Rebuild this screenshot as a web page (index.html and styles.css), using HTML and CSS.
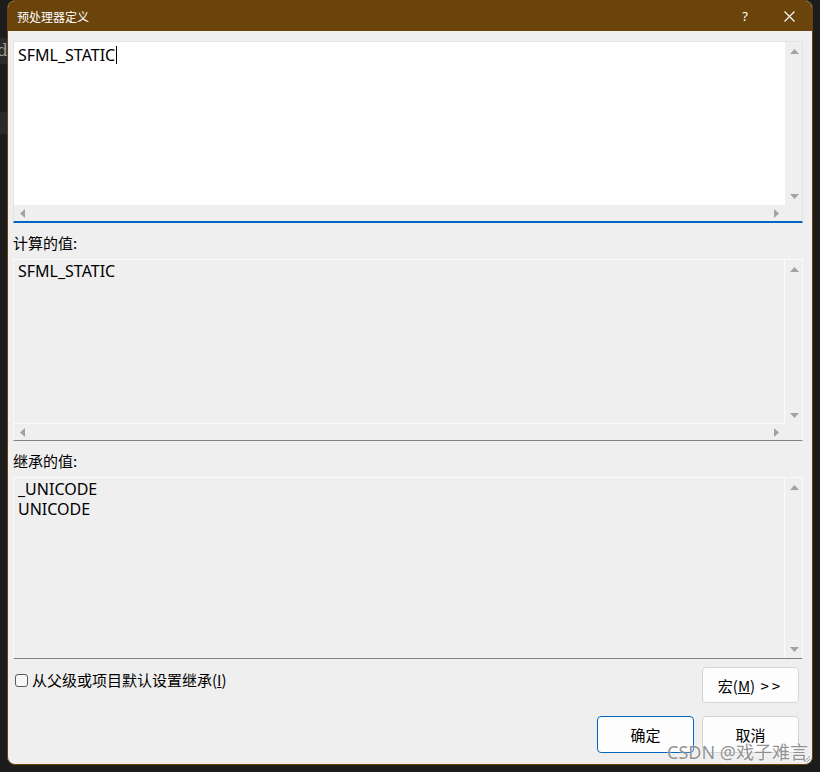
FILE: index.html
```html
<!DOCTYPE html>
<html lang="zh-CN">
<head>
  <meta charset="UTF-8" />
  <title>预处理器定义</title>
  <link rel="stylesheet" href="styles.css">
</head>
<body>

  <div class="desk">
    <div class="behind">
      <div class="behind-top"></div>
      <div class="behind-line">d</div>
      <div class="behind-gap"></div>
      <div class="behind-band"></div>
    </div>

    <div class="window">
      <div class="titlebar">
        <span class="title">预处理器定义</span>
        <span class="help">?</span>
        <svg class="close" width="11" height="11" viewBox="0 0 11 11">
          <path d="M0.5 0.5 L10.5 10.5 M10.5 0.5 L0.5 10.5" stroke="#fff" stroke-width="1.1" fill="none"/>
        </svg>
      </div>

      <div class="content">
        <!-- editable list -->
        <div class="field editable">
          <div class="text-area"><div class="line">SFML_STATIC<span class="caret"></span></div></div>
          <div class="vscroll">
            <svg width="9" height="5"><polygon points="0,5 4.5,0 9,5" fill="#a3a3a3"/></svg>
            <svg width="9" height="5"><polygon points="0,0 4.5,5 9,0" fill="#a3a3a3"/></svg>
          </div>
          <div class="hscroll">
            <svg width="5" height="9"><polygon points="5,0 0,4.5 5,9" fill="#a3a3a3"/></svg>
            <svg width="5" height="9"><polygon points="0,0 5,4.5 0,9" fill="#a3a3a3"/></svg>
          </div>
          <div class="corner"></div>
        </div>

        <div class="label">计算的值:</div>
        <div class="field readonly">
          <div class="text-area"><div class="line">SFML_STATIC</div></div>
          <div class="vscroll">
            <svg width="9" height="5"><polygon points="0,5 4.5,0 9,5" fill="#a3a3a3"/></svg>
            <svg width="9" height="5"><polygon points="0,0 4.5,5 9,0" fill="#a3a3a3"/></svg>
          </div>
          <div class="hscroll">
            <svg width="5" height="9"><polygon points="5,0 0,4.5 5,9" fill="#a3a3a3"/></svg>
            <svg width="5" height="9"><polygon points="0,0 5,4.5 0,9" fill="#a3a3a3"/></svg>
          </div>
          <div class="corner"></div>
        </div>

        <div class="label">继承的值:</div>
        <div class="field readonly no-h">
          <div class="text-area">
            <div class="line">_UNICODE</div>
            <div class="line">UNICODE</div>
          </div>
          <div class="vscroll">
            <svg width="9" height="5"><polygon points="0,5 4.5,0 9,5" fill="#a3a3a3"/></svg>
            <svg width="9" height="5"><polygon points="0,0 4.5,5 9,0" fill="#a3a3a3"/></svg>
          </div>
        </div>

        <div class="row-options">
          <label class="check">
            <span class="box"></span>
            从父级或项目默认设置继承(<u>I</u>)
          </label>
          <button class="btn">宏(<u>M</u>) <span class="arrows">&gt;&gt;</span></button>
        </div>

        <div class="row-actions">
          <button class="btn default">确定</button>
          <button class="btn">取消</button>
        </div>
      </div>

      <div class="grip">
        <svg width="10" height="10" viewBox="0 0 10 10">
          <path d="M9 3 L3 9 M9 6 L6 9" stroke="#9a9a9a" stroke-width="1" fill="none"/>
        </svg>
      </div>
      <div class="watermark">CSDN @戏子难言</div>
    </div>
  </div>

</body>
</html>
```

FILE: styles.css
```css
* {
  box-sizing: border-box;
}

body {
  margin: 0;
  background: #1c1c1c;
  font-family: "Noto Sans", "Noto Sans CJK SC", sans-serif;
  color: #000;
  width: 820px;
  height: 772px;
  overflow: hidden;
}

.desk {
  display: flex;
  align-items: flex-start;
}

.behind {
  width: 7px;
  display: flex;
  flex-direction: column;
}

.behind-top {
  height: 38px;
}

.behind-line {
  height: 26px;
  background: #2b2b2b;
  color: #9a9a9a;
  font-family: "DejaVu Serif", serif;
  font-size: 17px;
  line-height: 24px;
  text-indent: -3px;
  overflow: hidden;
}

.behind-gap {
  height: 48px;
}

.behind-band {
  height: 22px;
  background: #2a2a2a;
}

.window {
  position: relative;
  width: 806px;
  height: 765px;
  background: #efefef;
  border: 1px solid #6b440c;
  border-radius: 8px;
  overflow: hidden;
  display: flex;
  flex-direction: column;
}

.titlebar {
  height: 30px;
  background: #6b440c;
  color: #fff;
  display: flex;
  align-items: center;
  padding-left: 9px;
  flex-shrink: 0;
}

.title {
  font-family: "Noto Sans CJK SC", sans-serif;
  font-size: 12px;
  flex: 1;
}

.help {
  font-family: "Noto Sans", sans-serif;
  font-size: 13px;
  margin-right: 36px;
}

.close {
  margin-right: 17px;
}

.content {
  padding: 10px 9px 0 5px;
  display: flex;
  flex-direction: column;
}

.field {
  height: 182px;
  display: grid;
  grid-template-columns: 1fr 17px;
  grid-template-rows: 1fr 16px;
  border: 1px solid #e4e4e4;
  border-bottom: 1px solid #838383;
}

.field.no-h {
  grid-template-rows: 1fr;
}

.field.editable {
  border-bottom: 2px solid #0067c0;
}

.field.editable .text-area {
  background: #fff;
  padding-top: 3px;
}

.field.readonly {
  border-color: #fbfbfb;
  border-bottom-color: #838383;
}

.field.readonly .text-area {
  border-right: 1px solid #fbfbfb;
  border-bottom: 1px solid #fbfbfb;
}

.field.no-h .text-area {
  border-bottom: none;
}

.text-area {
  padding: 1px 4px;
  font-size: 16px;
}

.line {
  height: 20px;
  line-height: 20px;
  display: flex;
  align-items: center;
}

.caret {
  display: inline-block;
  width: 1px;
  height: 18px;
  background: #000;
  margin-left: 1px;
}

.vscroll {
  display: flex;
  flex-direction: column;
  align-items: center;
  justify-content: space-between;
  padding: 7px 0 6px 1px;
}

.hscroll {
  display: flex;
  align-items: center;
  justify-content: space-between;
  padding: 0 6px 0 6px;
}

.label {
  height: 36px;
  padding-top: 10px;
  line-height: 20px;
  font-family: "Noto Sans CJK SC", sans-serif;
  font-size: 15px;
}

.row-options {
  margin-top: 8px;
  display: flex;
  justify-content: space-between;
  align-items: flex-start;
  padding-right: 4px;
}

.check {
  display: flex;
  align-items: center;
  padding-top: 3px;
  padding-left: 2px;
  font-family: "Noto Sans CJK SC", sans-serif;
  font-size: 15px;
  line-height: 20px;
}

.box {
  width: 13px;
  height: 13px;
  border: 1px solid #5a5a5a;
  border-radius: 3px;
  background: #f7f7f7;
  margin-right: 4px;
}

.btn {
  width: 97px;
  height: 36px;
  background: #fdfdfd;
  border: 1px solid #d4d4d4;
  border-radius: 4px;
  font-family: "Noto Sans CJK SC", sans-serif;
  font-size: 15px;
  color: #000;
  padding: 0;
}

.arrows {
  letter-spacing: 3px;
  margin-left: 2px;
}

.row-actions {
  margin-top: 13px;
  display: flex;
  justify-content: flex-end;
  gap: 8px;
  padding-right: 4px;
}

.row-actions .btn {
  height: 37px;
}

.btn.default {
  border: 1px solid #0067c0;
}

.grip {
  position: absolute;
  right: 1px;
  bottom: 1px;
  line-height: 0;
}

.watermark {
  position: absolute;
  right: 4px;
  bottom: 0;
  font-family: "Noto Sans", "Noto Sans CJK SC", sans-serif;
  font-size: 18px;
  color: rgba(110, 110, 110, 0.75);
  text-shadow: 0 0 2px #fff;
}
```
